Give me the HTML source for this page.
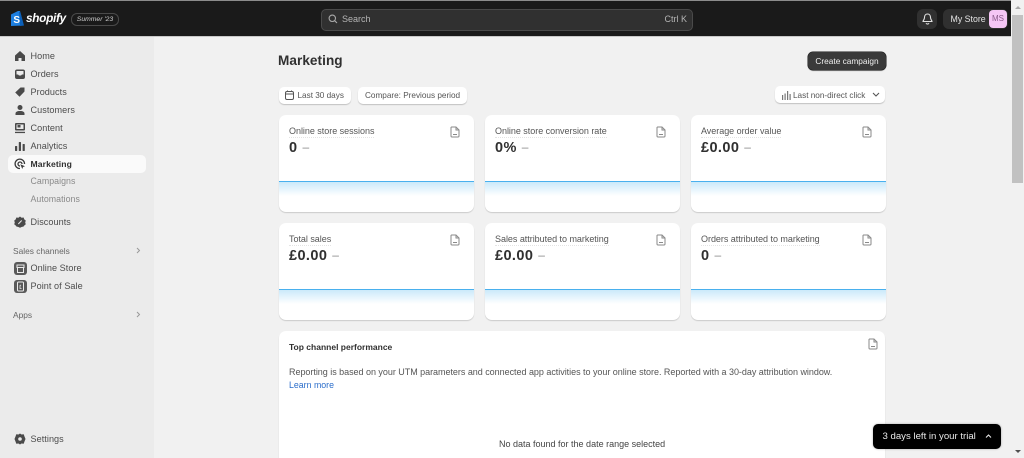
<!DOCTYPE html>
<html><head><meta charset="utf-8"><style>
html,body{margin:0;padding:0;width:1024px;height:458px;overflow:hidden;background:#f1f1f1;font-family:"Liberation Sans",sans-serif;}
body{position:relative}
.a{position:absolute;white-space:nowrap}
.t{position:absolute;white-space:nowrap;font-size:9px;line-height:12px;color:#4a4a4a}
.nav{left:30.5px;color:#4c4c4c;font-size:9.1px;letter-spacing:.05px}
.sub{left:30.5px;color:#8a8a8a;font-size:8.8px;letter-spacing:.05px}
.ic{position:absolute;left:14px;width:12px;height:12px}
.card{position:absolute;width:195px;height:97px;background:#fff;border-radius:7px;box-shadow:0 1px 1px rgba(0,0,0,.16);overflow:hidden}
.card .lb{position:absolute;left:10px;top:10px;font-size:9px;line-height:12px;color:#555;letter-spacing:-.03px;white-space:nowrap;border-bottom:1px dotted #e4e4e4}
.card .v{position:absolute;left:10px;top:24px;font-size:14.5px;line-height:18px;font-weight:bold;color:#303030;letter-spacing:.4px;white-space:nowrap}
.card .v i{font-style:normal;font-weight:normal;color:#8a8a8a;font-size:12px;margin-left:5px;position:relative;top:-1px}
.card .ln{position:absolute;left:0;right:0;top:66px;height:1px;background:#49b0ee}
.card .gr{position:absolute;left:0;right:0;top:67px;height:14px;background:linear-gradient(#cbe9fa,#fff)}
.card svg{position:absolute;left:171px;top:11px}
.btn{position:absolute;background:#fff;border-radius:5px;box-shadow:0 1px 1px rgba(0,0,0,.2);height:17px}
.s{font-size:8.2px;color:#555}
</style></head><body>
<div class="a" style="left:0;top:0;width:1011px;height:1px;background:#8c8c8c"></div>
<div class="a" style="left:0;top:1px;width:1011px;height:35px;background:#1a1a1a"></div>
<div class="a" style="left:0;top:36px;width:1011px;height:1px;background:#c9c9c9"></div>

<svg class="a" style="left:10px;top:10px" width="15" height="17" viewBox="0 0 15 17"><path d="M1 4.5 L8 1 L10 1 L13.5 15.5 L1 16 Z" fill="#1d7fe0"/><path d="M9 1.5L10.5 2.5 14 15.5 10 16Z" fill="#0b5fb8"/><text x="3.4" y="13" font-family="Liberation Sans" font-size="10" font-weight="bold" fill="#fff">S</text></svg>
<div class="a" style="left:26px;top:10px;font-size:11.8px;line-height:17px;font-weight:bold;font-style:italic;color:#fff;letter-spacing:-.3px">shopify</div>
<div class="a" style="left:71px;top:13px;width:46px;height:11px;border:1px solid #4a4a4a;border-radius:6px;font-size:6.8px;line-height:11px;font-style:italic;color:#cfcfcf;text-align:center">Summer '23</div>

<div class="a" style="left:321px;top:9px;width:370px;height:20px;background:#303030;border:1px solid #4a4a4a;border-radius:5px"></div>
<svg class="a" style="left:328px;top:14px" width="10" height="10" viewBox="0 0 10 10" fill="none" stroke="#a8a8a8" stroke-width="1.1"><circle cx="4.3" cy="4.3" r="3.2"/><path d="M6.8 6.8L9 9"/></svg>
<div class="t" style="left:342px;top:13px;color:#b5b5b5">Search</div>
<div class="t" style="left:664.5px;top:13px;color:#b5b5b5">Ctrl K</div>

<div class="a" style="left:917px;top:9px;width:20px;height:20px;background:#303030;border-radius:6px"></div>
<svg class="a" style="left:922px;top:13px" width="11" height="12" viewBox="0 0 11 12" fill="none" stroke="#e3e3e3" stroke-width="1.1"><path d="M5.5 1C3.5 1 2.5 2.6 2.5 4.5C2.5 6.5 1 7.5 1 8.5H10C10 7.5 8.5 6.5 8.5 4.5C8.5 2.6 7.5 1 5.5 1Z"/><path d="M4 10.3C4.5 11.3 6.5 11.3 7 10.3"/></svg>
<div class="a" style="left:943px;top:9px;width:65px;height:20px;background:#303030;border-radius:6px"></div>
<div class="t" style="left:950.5px;top:13px;color:#e3e3e3;font-size:8.8px">My Store</div>
<div class="a" style="left:989px;top:10px;width:18px;height:18px;background:#f5c6f5;border-radius:4px;font-size:8px;line-height:18px;text-align:center;color:#8a5a8a">MS</div>

<div class="a" style="left:1011px;top:0;width:13px;height:458px;background:#f1f1f1"></div>
<div class="a" style="left:1012px;top:15px;width:11px;height:168px;background:#c1c1c1"></div>
<div class="a" style="left:1014.5px;top:6px;width:0;height:0;border-left:3px solid transparent;border-right:3px solid transparent;border-bottom:3px solid #a8a8a8"></div>
<div class="a" style="left:1014.5px;top:450px;width:0;height:0;border-left:3px solid transparent;border-right:3px solid transparent;border-top:3px solid #505050"></div>

<div class="a" style="left:0;top:37px;width:154px;height:421px;background:#ebebeb"></div>
<div class="a" style="left:8px;top:155px;width:138px;height:18px;background:#fafafa;border-radius:5px"></div>

<svg class="ic" style="top:50px" viewBox="0 0 12 12" fill="#4a4a4a"><path d="M6 1L11 5.5V11H7.5V8H4.5V11H1V5.5Z"/></svg>
<svg class="ic" style="top:68px" viewBox="0 0 12 12"><rect x="1" y="1.5" width="10" height="9.5" rx="2" fill="#4a4a4a"/><path d="M2.5 3H9.5V6.5H8L7 7.5H5L4 6.5H2.5Z" fill="#ebebeb"/></svg>
<svg class="ic" style="top:86px" viewBox="0 0 12 12" fill="#4a4a4a"><path d="M6.5 1.5H10.5V5.5L5.5 10.8L1.2 6.5Z"/></svg>
<svg class="ic" style="top:104px" viewBox="0 0 12 12" fill="#4a4a4a"><circle cx="6" cy="3.5" r="2.5"/><path d="M1.5 11V9.5C1.5 8 3 7 6 7S10.5 8 10.5 9.5V11Z"/></svg>
<svg class="ic" style="top:122px" viewBox="0 0 12 12"><rect x="1" y="1" width="10" height="7.5" rx="1" fill="#4a4a4a"/><rect x="2.5" y="2.5" width="7" height="4.5" fill="#ebebeb"/><rect x="3.5" y="3" width="3" height="2.5" fill="#4a4a4a"/><rect x="1" y="9.8" width="10" height="1.3" fill="#4a4a4a"/></svg>
<svg class="ic" style="top:140px" viewBox="0 0 12 12" fill="#4a4a4a"><rect x="1" y="6" width="2.2" height="5" rx=".6"/><rect x="4.8" y="2" width="2.2" height="9" rx=".6"/><rect x="8.6" y="4" width="2.2" height="7" rx=".6"/></svg>
<svg class="ic" style="top:158px" viewBox="0 0 12 12" fill="none" stroke="#3a3a3a" stroke-width="1.3"><path d="M10.5 6A4.700 4.700 0 1 0 6 10.5"/><path d="M8 6A2 2 0 1 0 6 8"/><path d="M6.3 6.3L11 8.2L9 9L8.3 11Z" fill="#3a3a3a" stroke="none"/></svg>
<svg class="ic" style="top:216px" viewBox="0 0 12 12"><path d="M6 .5L7.6 1.7 9.6 1.5 10.3 3.4 11.8 4.6 11.2 6.5 11.8 8.3 10.3 9.5 9.6 10.5 7.6 11 6 11.8 4.4 11 2.4 10.5 1.7 9.5 .2 8.3 .8 6.5 .2 4.6 1.7 3.4 2.4 1.5 4.4 1.7Z" fill="#4a4a4a"/><path d="M4.3 8L7.7 4.5" stroke="#ebebeb" stroke-width="1"/></svg>
<svg class="ic" style="top:262px;left:14px;width:13px;height:13px" viewBox="0 0 13 13"><rect width="13" height="13" rx="3" fill="#5a5a5a"/><path d="M3 3H10V5.5H3Z M3.5 6V10.5H9.5V6" fill="none" stroke="#ebebeb" stroke-width="1"/></svg>
<svg class="ic" style="top:280px;left:14px;width:13px;height:13px" viewBox="0 0 13 13"><rect width="13" height="13" rx="3" fill="#5a5a5a"/><rect x="3.5" y="2" width="6" height="9" rx="1" fill="none" stroke="#ebebeb"/><path d="M5.5 8.5H7.5M6 8V5.5L7 5" stroke="#ebebeb" stroke-width=".8" fill="none"/></svg>
<svg class="ic" style="top:433px" viewBox="0 0 12 12"><path d="M6 .5L7.5 1.5 9.7 1.3 10.4 3.2 11.5 6 10.4 8.8 9.7 10.7 7.5 10.5 6 11.5 4.5 10.5 2.3 10.7 1.6 8.8 .5 6 1.6 3.2 2.3 1.3 4.5 1.5Z" fill="#4a4a4a"/><circle cx="6" cy="6" r="1.8" fill="#ebebeb"/></svg>

<div class="t nav" style="top:50px">Home</div>
<div class="t nav" style="top:68px">Orders</div>
<div class="t nav" style="top:86px">Products</div>
<div class="t nav" style="top:104px">Customers</div>
<div class="t nav" style="top:122px">Content</div>
<div class="t nav" style="top:140px">Analytics</div>
<div class="t nav" style="top:158px;color:#303030;font-weight:bold;font-size:8.6px;letter-spacing:.1px">Marketing</div>
<div class="t sub" style="top:175px">Campaigns</div>
<div class="t sub" style="top:193px">Automations</div>
<div class="t nav" style="top:216px">Discounts</div>
<div class="t" style="left:13px;top:245px;font-size:8.4px;color:#666">Sales channels</div>
<div class="t nav" style="top:262px">Online Store</div>
<div class="t nav" style="top:280px">Point of Sale</div>
<div class="t" style="left:13px;top:309px;font-size:8.4px;color:#666">Apps</div>
<svg class="a" style="left:136px;top:247px" width="5" height="7" viewBox="0 0 5 7" fill="none" stroke="#999"><path d="M1 1L3.5 3.5 1 6"/></svg>
<svg class="a" style="left:136px;top:311px" width="5" height="7" viewBox="0 0 5 7" fill="none" stroke="#999"><path d="M1 1L3.5 3.5 1 6"/></svg>
<div class="t nav" style="top:433px">Settings</div>

<div class="a" style="left:278px;top:52px;font-size:13.6px;line-height:18px;font-weight:bold;color:#303030;letter-spacing:.05px">Marketing</div>
<div class="a" style="left:808px;top:52px;width:78px;height:18px;background:#3a3a3a;border-radius:5px;box-shadow:0 0 0 .5px #1a1a1a,0 1px 1px rgba(0,0,0,.3);font-size:8.3px;line-height:18px;text-align:center;color:#f0f0f0">Create campaign</div>

<div class="btn" style="left:279px;top:86.5px;width:72px"></div>
<svg class="a" style="left:285px;top:90px" width="9" height="10" viewBox="0 0 9 10" fill="none" stroke="#555" stroke-width="1"><rect x=".5" y="1.5" width="8" height="8" rx="1.5"/><path d="M.5 4H8.5M2.5 .5V2M6.5 .5V2"/></svg>
<div class="t s" style="left:297.5px;top:90px">Last 30 days</div>
<div class="btn" style="left:358px;top:86.5px;width:109px"></div>
<div class="t s" style="left:365px;top:90px">Compare: Previous period</div>
<div class="btn" style="left:775px;top:86px;width:110px"></div>
<svg class="a" style="left:781px;top:90px" width="10" height="10" viewBox="0 0 10 10" fill="#777"><rect x="1" y="5" width="1.2" height="5"/><rect x="3.5" y="3.5" width="1.2" height="6.5"/><rect x="6" y="1" width="1.2" height="9"/><rect x="8.5" y="4" width="1.2" height="6"/></svg>
<div class="t s" style="left:793px;top:89.5px">Last non-direct click</div>
<svg class="a" style="left:872px;top:92px" width="8" height="5" viewBox="0 0 8 5" fill="none" stroke="#555" stroke-width="1.1"><path d="M1 1L4 4 7 1"/></svg>

<div class="card" style="left:279px;top:115px"><div class="lb">Online store sessions</div><div class="v">0<i>–</i></div><div class="ln"></div><div class="gr"></div><svg width="10" height="12" viewBox="0 0 10 12" fill="none" stroke="#8a8a8a"><path d="M1.5 1H6L9 4V10C9 10.6 8.6 11 8 11H2C1.4 11 1 10.6 1 10V1.5Z"/><path d="M6 1V4H9M3 8.5H7"/></svg></div>
<div class="card" style="left:485px;top:115px"><div class="lb">Online store conversion rate</div><div class="v">0%<i>–</i></div><div class="ln"></div><div class="gr"></div><svg width="10" height="12" viewBox="0 0 10 12" fill="none" stroke="#8a8a8a"><path d="M1.5 1H6L9 4V10C9 10.6 8.6 11 8 11H2C1.4 11 1 10.6 1 10V1.5Z"/><path d="M6 1V4H9M3 8.5H7"/></svg></div>
<div class="card" style="left:691px;top:115px"><div class="lb">Average order value</div><div class="v">£0.00<i>–</i></div><div class="ln"></div><div class="gr"></div><svg width="10" height="12" viewBox="0 0 10 12" fill="none" stroke="#8a8a8a"><path d="M1.5 1H6L9 4V10C9 10.6 8.6 11 8 11H2C1.4 11 1 10.6 1 10V1.5Z"/><path d="M6 1V4H9M3 8.5H7"/></svg></div>
<div class="card" style="left:279px;top:223px"><div class="lb">Total sales</div><div class="v">£0.00<i>–</i></div><div class="ln"></div><div class="gr"></div><svg width="10" height="12" viewBox="0 0 10 12" fill="none" stroke="#8a8a8a"><path d="M1.5 1H6L9 4V10C9 10.6 8.6 11 8 11H2C1.4 11 1 10.6 1 10V1.5Z"/><path d="M6 1V4H9M3 8.5H7"/></svg></div>
<div class="card" style="left:485px;top:223px"><div class="lb">Sales attributed to marketing</div><div class="v">£0.00<i>–</i></div><div class="ln"></div><div class="gr"></div><svg width="10" height="12" viewBox="0 0 10 12" fill="none" stroke="#8a8a8a"><path d="M1.5 1H6L9 4V10C9 10.6 8.6 11 8 11H2C1.4 11 1 10.6 1 10V1.5Z"/><path d="M6 1V4H9M3 8.5H7"/></svg></div>
<div class="card" style="left:691px;top:223px"><div class="lb">Orders attributed to marketing</div><div class="v">0<i>–</i></div><div class="ln"></div><div class="gr"></div><svg width="10" height="12" viewBox="0 0 10 12" fill="none" stroke="#8a8a8a"><path d="M1.5 1H6L9 4V10C9 10.6 8.6 11 8 11H2C1.4 11 1 10.6 1 10V1.5Z"/><path d="M6 1V4H9M3 8.5H7"/></svg></div>

<div class="a" style="left:279px;top:331px;width:606px;height:127px;background:#fff;border-radius:7px 7px 0 0;box-shadow:0 1px 1px rgba(0,0,0,.16)"></div>
<div class="t" style="left:289px;top:341px;font-weight:bold;color:#303030;font-size:8.5px">Top channel performance</div>
<div class="t" style="left:289px;top:366px;color:#555;letter-spacing:-.03px">Reporting is based on your UTM parameters and connected app activities to your online store. Reported with a 30-day attribution window.</div>
<div class="t" style="left:289px;top:379px;color:#2c6ecb;font-size:8.8px">Learn more</div>
<div class="t" style="left:499px;top:438px;color:#444">No data found for the date range selected</div>
<svg class="a" style="left:868px;top:338px" width="10" height="12" viewBox="0 0 10 12" fill="none" stroke="#8a8a8a"><path d="M1.5 1H6L9 4V10C9 10.6 8.6 11 8 11H2C1.4 11 1 10.6 1 10V1.5Z"/><path d="M6 1V4H9M3 8.5H7"/></svg>

<div class="a" style="left:873px;top:424px;width:128px;height:25px;background:#000;border-radius:5px;box-shadow:0 0 2px rgba(0,0,0,.3)"></div>
<div class="t" style="left:882.5px;top:431px;color:#e8e8e8;font-size:9.6px">3 days left in your trial</div>
<svg class="a" style="left:985px;top:434px" width="7" height="5" viewBox="0 0 7 5" fill="none" stroke="#e8e8e8" stroke-width="1.1"><path d="M1 3.5L3.5 1 6 3.5"/></svg>
</body></html>
